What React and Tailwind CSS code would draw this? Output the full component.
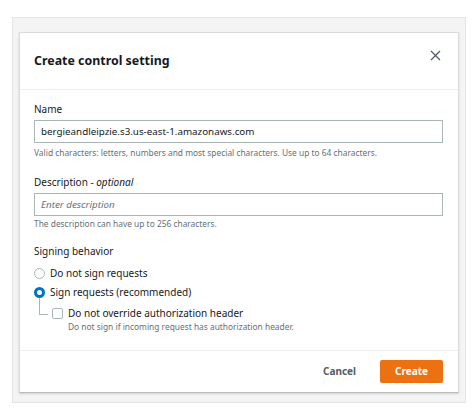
import { useState } from 'react';

// Radio button in the AWS console style
function Radio({ checked, label, onClick }) {
  return (
    <button type="button" onClick={onClick} className="flex items-center h-[16px] text-left">
      {checked ? (
        <span className="w-[11px] h-[11px] rounded-full border-[3.5px] border-[#0073bb] bg-white box-border" />
      ) : (
        <span className="w-[11px] h-[11px] rounded-full border border-[#aab7b8] bg-white box-border" />
      )}
      <span className="ml-[5px] text-[10px] leading-[16px] text-[#16191f]">{label}</span>
    </button>
  );
}

export default function App() {
  const [signing, setSigning] = useState('sign');
  const [noOverride, setNoOverride] = useState(false);
  const [name, setName] = useState('bergieandleipzie.s3.us-east-1.amazonaws.com');
  const [description, setDescription] = useState('');

  return (
    <div className="w-[474px] h-[417px] bg-white pt-[17px] pl-[12px] pr-[8px] font-['Noto_Sans',sans-serif]">
      <div className="h-[386px] bg-[#f4f4f4] border border-[#e4e4e4] px-[6px] pt-[14px]">
        <div className="h-[361px] bg-white border border-[#dcdcdc] border-b-[#b8bcbf] shadow-[0_1px_2px_rgba(0,0,0,0.15)] flex flex-col">
          {/* Header */}
          <div className="h-[57px] shrink-0 flex items-center justify-between pl-[14px] pr-[17px] border-b border-[#eaeded]">
            <h2 className="text-[12.4px] font-bold text-[#16191f] pt-[1px]">Create control setting</h2>
            <button type="button" className="text-[#545b64] -mt-[11px]">
              <svg width="11" height="11" viewBox="0 0 11 11" fill="none" stroke="currentColor" strokeWidth="1.3">
                <path d="M1 1l9 9M10 1l-9 9" />
              </svg>
            </button>
          </div>

          {/* Body */}
          <div className="flex-1 pl-[14px] pr-[15px] pt-[11px]">
            <label className="block text-[10px] leading-[16px] text-[#16191f]">Name</label>
            <input
              value={name}
              onChange={(e) => setName(e.target.value)}
              className="mt-[3px] w-full h-[23px] border border-[#aab7b8] px-[6px] text-[9.8px] text-[#16191f] outline-none"
            />
            <p className="mt-[3px] text-[8.4px] leading-[14px] text-[#687078]">
              Valid characters: letters, numbers and most special characters. Use up to 64 characters.
            </p>

            <label className="mt-[14px] block text-[10px] leading-[16px] text-[#16191f]">
              Description - <i>optional</i>
            </label>
            <input
              value={description}
              onChange={(e) => setDescription(e.target.value)}
              placeholder="Enter description"
              className="mt-[2px] w-full h-[23px] border border-[#aab7b8] px-[6px] text-[9.8px] text-[#16191f] italic placeholder:text-[#687078] placeholder:italic outline-none"
            />
            <p className="mt-[1px] text-[8.4px] leading-[14px] text-[#687078]">
              The description can have up to 256 characters.
            </p>

            <div className="mt-[12px] text-[10px] leading-[16px] text-[#16191f]">Signing behavior</div>
            <div className="mt-[6px]">
              <Radio checked={signing === 'none'} label="Do not sign requests" onClick={() => setSigning('none')} />
            </div>
            <div className="mt-[3px]">
              <Radio checked={signing === 'sign'} label="Sign requests (recommended)" onClick={() => setSigning('sign')} />
            </div>

            <div className="flex mt-[-2px]">
              <div className="ml-[5px] w-[9px] h-[17px] border-l border-b border-[#aab7b8] shrink-0" />
              <div className="ml-[4px] pt-[7px]">
                <button type="button" onClick={() => setNoOverride(!noOverride)} className="flex items-center h-[16px]">
                  <span className={`w-[11px] h-[11px] rounded-[2px] border ${noOverride ? 'bg-[#0073bb] border-[#0073bb]' : 'bg-white border-[#aab7b8]'}`} />
                  <span className="ml-[5px] text-[10px] leading-[16px] text-[#16191f]">Do not override authorization header</span>
                </button>
                <p className="ml-[16px] text-[8.4px] leading-[12px] text-[#687078]">
                  Do not sign if incoming request has authorization header.
                </p>
              </div>
            </div>
          </div>

          {/* Footer */}
          <div className="h-[42px] shrink-0 border-t border-[#eaeded] flex items-center justify-end pr-[15px]">
            <button type="button" className="mr-[24px] text-[10px] font-bold text-[#545b64]">Cancel</button>
            <button type="button" className="w-[63px] h-[23px] bg-[#ec7211] rounded-[2px] text-[10px] font-bold text-white">
              Create
            </button>
          </div>
        </div>
      </div>
    </div>
  );
}
